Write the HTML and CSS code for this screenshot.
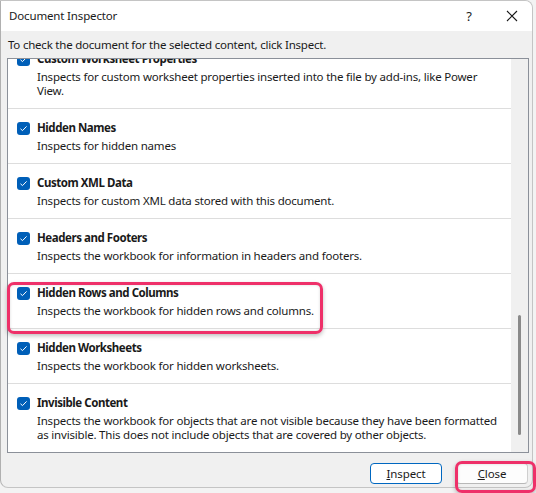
FILE: index.html
```html
<!DOCTYPE html>
<html>
<head>
<meta charset="utf-8">
<link rel="stylesheet" href="styles.css">
</head>
<body>
<div class="stage">
  <div class="dialog">
    <div class="titlebar">
      <span class="title">Document Inspector</span>
      <span class="help">?</span>
      <span class="close-x">
        <svg width="12" height="12" viewBox="0 0 12 12"><path d="M1 1L11 11M11 1L1 11" stroke="#1a1a1a" stroke-width="1.1" fill="none"/></svg>
      </span>
    </div>
    <div class="instr">To check the document for the selected content, click Inspect.</div>
    <div class="listbox">
      <div class="viewport">
        <div class="items">
          <div class="item">
            <span class="cb"><svg width="13" height="13" viewBox="0 0 13 13"><path d="M3.5 6.8L5.5 8.6L9.6 4.4" stroke="#fff" stroke-width="1" fill="none"/></svg></span>
            <div class="text">
              <div class="name">Custom Worksheet Properties</div>
              <div class="desc">Inspects for custom worksheet properties inserted into the file by add-ins, like Power View.</div>
            </div>
          </div>
          <div class="item">
            <span class="cb"><svg width="13" height="13" viewBox="0 0 13 13"><path d="M3.5 6.8L5.5 8.6L9.6 4.4" stroke="#fff" stroke-width="1" fill="none"/></svg></span>
            <div class="text">
              <div class="name">Hidden Names</div>
              <div class="desc">Inspects for hidden names</div>
            </div>
          </div>
          <div class="item">
            <span class="cb"><svg width="13" height="13" viewBox="0 0 13 13"><path d="M3.5 6.8L5.5 8.6L9.6 4.4" stroke="#fff" stroke-width="1" fill="none"/></svg></span>
            <div class="text">
              <div class="name">Custom XML Data</div>
              <div class="desc">Inspects for custom XML data stored with this document.</div>
            </div>
          </div>
          <div class="item">
            <span class="cb"><svg width="13" height="13" viewBox="0 0 13 13"><path d="M3.5 6.8L5.5 8.6L9.6 4.4" stroke="#fff" stroke-width="1" fill="none"/></svg></span>
            <div class="text">
              <div class="name">Headers and Footers</div>
              <div class="desc">Inspects the workbook for information in headers and footers.</div>
            </div>
          </div>
          <div class="item">
            <span class="cb"><svg width="13" height="13" viewBox="0 0 13 13"><path d="M3.5 6.8L5.5 8.6L9.6 4.4" stroke="#fff" stroke-width="1" fill="none"/></svg></span>
            <div class="text">
              <div class="name">Hidden Rows and Columns</div>
              <div class="desc">Inspects the workbook for hidden rows and columns.</div>
            </div>
          </div>
          <div class="item">
            <span class="cb"><svg width="13" height="13" viewBox="0 0 13 13"><path d="M3.5 6.8L5.5 8.6L9.6 4.4" stroke="#fff" stroke-width="1" fill="none"/></svg></span>
            <div class="text">
              <div class="name">Hidden Worksheets</div>
              <div class="desc">Inspects the workbook for hidden worksheets.</div>
            </div>
          </div>
          <div class="item last">
            <span class="cb"><svg width="13" height="13" viewBox="0 0 13 13"><path d="M3.5 6.8L5.5 8.6L9.6 4.4" stroke="#fff" stroke-width="1" fill="none"/></svg></span>
            <div class="text">
              <div class="name">Invisible Content</div>
              <div class="desc">Inspects the workbook for objects that are not visible because they have been formatted as invisible. This does not include objects that are covered by other objects.</div>
            </div>
          </div>
        </div>
      </div>
      <div class="scrollbar"><div class="thumb"></div></div>
    </div>
    <div class="footer">
      <button class="btn primary"><u>I</u>nspect</button>
      <button class="btn"><u>C</u>lose</button>
    </div>
  </div>
  <div class="mark mark-row"></div>
  <div class="mark mark-close"></div>
</div>
</body>
</html>
```
FILE: styles.css
```css
html, body {
  margin: 0;
  padding: 0;
}
body {
  background: #f3f3f3;
  font-family: "Noto Sans", "Open Sans", sans-serif;
  font-size: 11.5px;
  color: #1a1a1a;
}
.stage {
  position: relative;
  width: 536px;
  height: 493px;
  overflow: hidden;
}
.dialog {
  width: 533px;
  height: 488px;
  box-sizing: border-box;
  border: 1px solid #c4c4c4;
  border-left-color: #b0b0b0;
  border-radius: 0 8px 8px 8px;
  background: #f0f0f0;
  overflow: hidden;
  display: flex;
  flex-direction: column;
}
.titlebar {
  height: 30px;
  background: #ffffff;
  display: flex;
  align-items: center;
  padding-left: 8px;
  flex-shrink: 0;
}
.title {
  flex: 1;
  font-size: 11.5px;
  letter-spacing: -0.15px;
  margin-top: -1px;
}
.help {
  width: 20px;
  text-align: center;
  margin-right: 27px;
  font-size: 13px;
}
.close-x {
  width: 12px;
  height: 12px;
  margin-right: 14px;
  display: flex;
}
.instr {
  height: 27px;
  line-height: 28px;
  padding-left: 7px;
  letter-spacing: -0.22px;
  flex-shrink: 0;
}
.listbox {
  margin-left: 6px;
  width: 522px;
  height: 395px;
  box-sizing: border-box;
  border: 1px solid #8b9099;
  background: #ffffff;
  display: flex;
  flex-shrink: 0;
}
.viewport {
  flex: 1;
  overflow: hidden;
}
.items {
  margin-top: -19px;
}
.item {
  display: flex;
  padding: 10px 0 10px 9px;
  border-bottom: 1px solid #dddddd;
}
.item.last {
  border-bottom: none;
}
.cb {
  width: 13px;
  height: 13px;
  border-radius: 3px;
  background: #005fb8;
  margin-top: 3px;
  margin-right: 7px;
  flex-shrink: 0;
  display: flex;
}
.text {
  flex: 1;
  padding-right: 12px;
}
.name {
  font-weight: 700;
  line-height: 18px;
  letter-spacing: -0.45px;
}
.desc {
  margin-top: 2px;
  line-height: 14px;
  letter-spacing: -0.2px;
}
.scrollbar {
  width: 17px;
  background: #f0f0f0;
  flex-shrink: 0;
  display: flex;
  flex-direction: column;
  align-items: center;
}
.thumb {
  width: 3px;
  height: 120px;
  margin-top: 256px;
  border-radius: 2px;
  background: #8a8a8a;
}
.footer {
  flex: 1;
  display: flex;
  justify-content: flex-end;
  align-items: flex-start;
  gap: 14px;
  padding: 10px 4px 0 0;
}
.btn {
  width: 72px;
  height: 21px;
  box-sizing: border-box;
  border: 1px solid #cfcfcf;
  border-bottom-color: #b8b8b8;
  border-radius: 4px;
  background: #fdfdfd;
  font-family: "Noto Sans", "Open Sans", sans-serif;
  font-size: 11.5px;
  color: #1a1a1a;
  padding: 0;
  line-height: 18px;
  letter-spacing: -0.1px;
}
.btn.primary {
  border: 1px solid #0067c0;
  background: #ffffff;
}
.mark {
  position: absolute;
  border: 3px solid #ee3069;
  border-radius: 7px;
  box-sizing: border-box;
  box-shadow: 0 2px 4px rgba(0,0,0,0.25), inset 0 0 3px rgba(0,0,0,0.15);
}
.mark-row {
  left: 7px;
  top: 282px;
  width: 316px;
  height: 52px;
}
.mark-close {
  left: 455px;
  top: 461px;
  width: 81px;
  height: 32px;
}
```
